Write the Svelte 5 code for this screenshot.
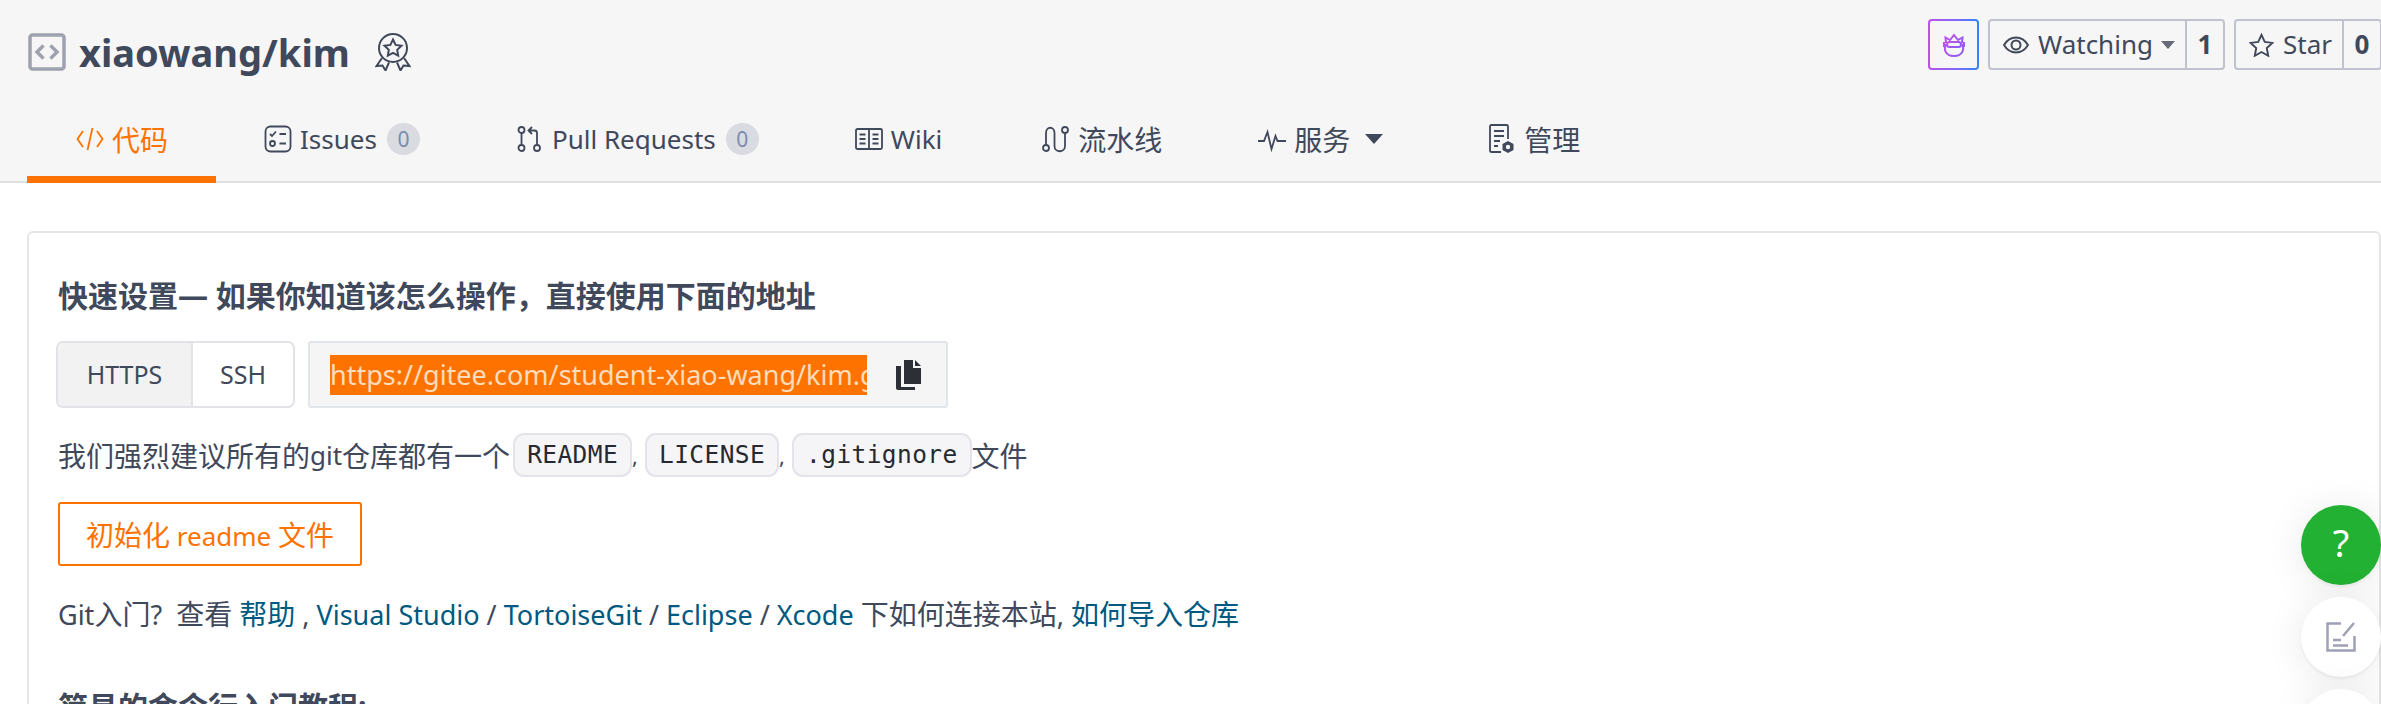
<script>
  const tabs = [
    { label: '代码', icon: 'code', active: true, cn: true },
    { label: 'Issues', icon: 'issues', count: 0 },
    { label: 'Pull Requests', icon: 'pr', count: 0 },
    { label: 'Wiki', icon: 'wiki' },
    { label: '流水线', icon: 'pipe', cn: true },
    { label: '服务', icon: 'pulse', caret: true, cn: true },
    { label: '管理', icon: 'manage', cn: true }
  ];
  const files = ['README', 'LICENSE', '.gitignore'];
</script>

<div class="page">
  <header class="head">
    <div class="top">
      <div class="title">
        <svg class="repo-icon" viewBox="0 0 38 38" width="38" height="38" fill="none" stroke="#9ea1ae">
          <rect x="2" y="2" width="34" height="34" rx="2.5" stroke-width="3.5" />
          <path d="M15.5 12.5 9 19l6.500 6.500M22.500 12.500 29 19l-6.500 6.500" stroke-width="3.500" />
        </svg>
        <h1>xiaowang/kim</h1>
        <svg class="medal" viewBox="0 0 36 38" width="36" height="38" fill="none" stroke="#40485b" stroke-width="2">
          <circle cx="18" cy="15" r="14" />
          <path d="M18 6.500l2.600 5.400 5.900.8-4.300 4.100 1 5.900-5.200-2.800-5.200 2.800 1-5.900-4.300-4.100 5.900-.8z" />
          <path d="M7 25 1.500 33l6-.5 3 5 3.500-8M29 25l5.500 8-6-.5-3 5-3.500-8" />
        </svg>
      </div>
      <div class="actions">
        <span class="gvp">
          <svg viewBox="0 0 26 26" width="26" height="26" fill="none" stroke="url(#gv)" stroke-width="2">
            <defs>
              <linearGradient id="gv" x1="0" y1="0" x2="1" y2="1">
                <stop offset="0" stop-color="#c04fe8" />
                <stop offset="1" stop-color="#8a5cf6" />
              </linearGradient>
            </defs>
            <path d="M5 11 4.500 5.500 9 8l4-5 4 5 4.500-2.500L21 11" />
            <rect x="6" y="10" width="14" height="5" rx="2.500" />
            <path d="M5 12c-2.500 5-1 12 8 12s10.500-7 8-12M3 10v5M23 10v5" />
          </svg>
        </span>
        <div class="btn-group watch">
          <span class="btn-main">
            <svg viewBox="0 0 26 18" width="26" height="18" fill="none" stroke="#40485b" stroke-width="2">
              <path d="M1 9c3-5 7.500-7.500 12-7.500S22 4 25 9c-3 5-7.500 7.500-12 7.500S4 14 1 9z" />
              <circle cx="13" cy="9" r="4.500" />
            </svg>
            Watching
            <i class="mini-caret"></i>
          </span>
          <b>1</b>
        </div>
        <div class="btn-group star">
          <span class="btn-main">
            <svg viewBox="0 0 26 25" width="25" height="24" fill="none" stroke="#40485b" stroke-width="2">
              <path d="M13 2l3.400 7.300 7.900 1-5.800 5.500 1.500 7.900L13 19.800l-7 3.900 1.500-7.900L1.700 10.300l7.900-1z" />
            </svg>
            Star
          </span>
          <b>0</b>
        </div>
      </div>
    </div>
    <nav class="tabs">
      {#each tabs as tab}
        <a class="tab" class:active={tab.active} class:has-caret={tab.caret} href="#top">
          <svg class="tab-icon" viewBox="0 0 28 30" width="28" height="30" fill="none" stroke="currentColor" stroke-width="1.800">
            {#if tab.icon === 'code'}
              <path d="M7 7 1.500 15 7 23M21 7l5.500 8L21 23M16.500 4l-5 22" />
            {:else if tab.icon === 'issues'}
              <rect x="1.500" y="2.500" width="25" height="25" rx="5" />
              <path d="M6 10l2 2 4-4.500M15.500 10H22M15.500 19.500H22" />
              <circle cx="8.500" cy="19.500" r="2.500" />
            {:else if tab.icon === 'pr'}
              <circle cx="5.500" cy="6" r="3" />
              <circle cx="5.500" cy="24" r="3" />
              <circle cx="21" cy="24" r="3" />
              <path d="M5.500 9v12M21 21V9c0-1.500-1-2.500-2.500-2.500H13M16 3l-3.500 3.500L16 10" />
            {:else if tab.icon === 'wiki'}
              <rect x="1" y="5" width="26" height="20" rx="1.500" />
              <path d="M14 5v20M4.500 10.500h6M4.500 15h6M4.500 19.500h6M17.500 10.500h6M17.500 15h6M17.500 19.500h6" />
            {:else if tab.icon === 'pipe'}
              <circle cx="4" cy="24" r="3" />
              <circle cx="23" cy="6" r="3" />
              <path d="M4 21V9c0-7 8.500-7 8.500 0v13c0 7 10.500 7 10.500 0V9" />
            {:else if tab.icon === 'pulse'}
              <path d="M0 17h6l3.500-9 4 17 4-13 2 5h8.500" />
            {:else if tab.icon === 'manage'}
              <path d="M13 28H3.500C2.500 28 2 27.500 2 26.500V2.500C2 1.500 2.500 1 3.500 1h15c1 0 1.500.5 1.500 1.500V15M6 7h10M6 12h10M6 17h6M6 22h4" />
              <path d="M20 17l5.500 3v6L20 29l-5.500-3v-6z" fill="currentColor" stroke="none" />
              <circle cx="20" cy="23" r="2.200" fill="#f6f6f6" stroke="none" />
            {/if}
          </svg>
          <span class:cn={tab.cn}>{tab.label}</span>
          {#if tab.count !== undefined}
            <span class="badge">{tab.count}</span>
          {/if}
          {#if tab.caret}
            <i class="caret"></i>
          {/if}
        </a>
      {/each}
    </nav>
  </header>

  <main class="card">
    <h3>快速设置— 如果你知道该怎么操作，直接使用下面的地址</h3>
    <div class="clone">
      <div class="proto">
        <span class="proto-on">HTTPS</span>
        <span>SSH</span>
      </div>
      <div class="url">
        <span class="selected">https://gitee.com/student-xiao-wang/kim.git</span>
        <svg viewBox="0 0 27 30" width="27" height="30" fill="#2d2f36">
          <path d="M9 0h9v8h8v16H9z" />
          <path d="M20 0l6 6h-6z" />
          <path d="M6 6v21h14v3H3a2 2 0 0 1-2-2V6z" />
        </svg>
      </div>
    </div>
    <p class="advice">
      <span class="cn">我们强烈建议所有的</span>git<span class="cn">仓库都有一个</span>{#each files as file, i}<code>{file}</code>{#if i < files.length - 1}<span class="comma">,</span>{/if}{/each}<span class="cn">文件</span>
    </p>
    <button class="init"><span class="cn">初始化</span> readme <span class="cn">文件</span></button>
    <p class="help">
      Git<span class="cn">入门</span>?&nbsp; <span class="cn">查看</span> <a href="#top" class="cn">帮助</a> , <a href="#top">Visual Studio</a> / <a href="#top">TortoiseGit</a> / <a href="#top">Eclipse</a> / <a href="#top">Xcode</a> <span class="cn">下如何连接本站</span>, <a href="#top" class="cn">如何导入仓库</a>
    </p>
    <h3 class="second">简易的命令行入门教程:</h3>
  </main>

  <div class="floats">
    <span class="fab green">?</span>
    <span class="fab">
      <svg viewBox="0 0 30 30" width="30" height="30" fill="none" stroke="#9ea1b5" stroke-width="2.500">
        <path d="M15 1.500H1.500v27h27V14M7 18h8M7 23.500h15M17 14 28 1" />
      </svg>
    </span>
    <span class="fab"></span>
  </div>
</div>

<style>
  :global(body) {
    margin: 0;
    background: #fff;
  }
  .page {
    position: relative;
    height: 704px;
    overflow: hidden;
    color: #40485b;
    font-family: "Noto Sans", "Noto Sans CJK SC", sans-serif;
    font-size: 26px;
  }
  .cn {
    font-size: 28px;
  }
  .head {
    height: 181px;
    background: #f6f6f6;
    border-bottom: 2px solid #e0e0e0;
  }
  .top {
    display: flex;
    justify-content: space-between;
    height: 104px;
    padding: 19px 0 0 28px;
    box-sizing: border-box;
  }
  .title {
    display: flex;
    align-items: center;
    height: 66px;
  }
  h1 {
    margin: 0 25px 0 13px;
    font-size: 38px;
    font-weight: 700;
    line-height: 44px;
  }
  .actions {
    display: flex;
    gap: 9px;
    height: 51px;
  }
  .gvp {
    display: flex;
    align-items: center;
    justify-content: center;
    width: 51px;
    box-sizing: border-box;
    border: 2px solid transparent;
    border-radius: 4px;
    background: linear-gradient(#f6f6f6, #f6f6f6) padding-box, linear-gradient(90deg, #c04fe8, #7a6cf8 60%, #2f86ff) border-box;
  }
  .btn-group {
    display: flex;
    align-items: stretch;
    box-sizing: border-box;
    border: 2px solid #c0c3ce;
    border-radius: 4px;
    line-height: 47px;
  }
  .watch {
    width: 237px;
  }
  .star {
    width: 148px;
    margin-right: -1px;
  }
  .btn-main {
    display: flex;
    align-items: center;
    flex: 1;
    gap: 9px;
    padding-left: 13px;
    border-right: 2px solid #c0c3ce;
  }
  .btn-group b {
    width: 36px;
    text-align: center;
  }
  .mini-caret {
    width: 0;
    height: 0;
    border: 7px solid transparent;
    border-top: 8px solid #666a76;
    border-bottom: 0;
    margin-left: -1px;
  }
  .tabs {
    display: flex;
    height: 77px;
    padding-left: 27px;
  }
  .tab {
    display: flex;
    align-items: center;
    box-sizing: border-box;
    height: 79px;
    padding: 0 48px 9px;
    color: #40485b;
    text-decoration: none;
  }
  .tab:first-child {
    padding-left: 49px;
  }
  .tab:nth-child(4) {
    padding-right: 52px;
  }
  .tab.active {
    color: #fe7300;
    border-bottom: 7px solid #fe7300;
    padding-bottom: 2px;
  }
  .tab.has-caret {
    padding-right: 57px;
  }
  .tab-icon {
    margin-right: 8px;
  }
  .badge {
    display: flex;
    align-items: center;
    justify-content: center;
    width: 33px;
    height: 32px;
    margin-left: 10px;
    border-radius: 16px;
    background: #d9dbe1;
    color: #7a8bb0;
    font-size: 21px;
  }
  .caret {
    width: 0;
    height: 0;
    margin-left: 15px;
    border: 9px solid transparent;
    border-top: 10px solid #40485b;
    border-bottom: 0;
  }
  .card {
    height: 600px;
    margin: 48px 0 0 27px;
    padding: 45px 0 0 29px;
    box-sizing: border-box;
    border: 2px solid #e5e5e5;
    border-radius: 6px;
  }
  h3 {
    margin: 0;
    font-size: 30px;
    font-weight: 700;
    line-height: 36px;
  }
  .clone {
    display: flex;
    gap: 13px;
    height: 67px;
    margin: 27px 0 0 -2px;
  }
  .proto {
    display: flex;
    width: 239px;
    box-sizing: border-box;
    border: 2px solid #e2e3e6;
    border-radius: 7px;
    overflow: hidden;
    font-size: 25px;
    line-height: 63px;
  }
  .proto span {
    flex: 1;
    text-align: center;
  }
  .proto .proto-on {
    flex: none;
    width: 133px;
    background: #f2f2f2;
    border-right: 2px solid #e2e3e6;
  }
  .url {
    display: flex;
    align-items: center;
    width: 640px;
    box-sizing: border-box;
    padding-left: 20px;
    background: #f5f5f6;
    border: 2px solid #e2e5ea;
    border-radius: 3px;
  }
  .selected {
    width: 537px;
    height: 40px;
    margin-right: 28px;
    overflow: hidden;
    white-space: nowrap;
    background: #fe7300;
    color: #ffdcbc;
    font-size: 27px;
    line-height: 40px;
  }
  .advice {
    display: flex;
    align-items: center;
    height: 44px;
    margin: 25px 0 0;
    white-space: nowrap;
  }
  code {
    height: 44px;
    margin-left: 3px;
    padding: 0 12px;
    box-sizing: border-box;
    background: #f5f5f8;
    border: 2px solid #e3e3e9;
    border-radius: 11px;
    color: #26292f;
    font-family: "DejaVu Sans Mono", monospace;
    font-size: 24.500px;
    letter-spacing: 0.4px;
    line-height: 40px;
  }
  .comma {
    width: 10px;
    color: #40485b;
    font-size: 22px;
  }
  .init {
    display: block;
    width: 304px;
    height: 64px;
    margin-top: 25px;
    padding: 0;
    background: #fff;
    border: 2px solid #fe7300;
    border-radius: 3px;
    color: #fe7300;
    font: inherit;
  }
  .help {
    margin: 29px 0 0;
    font-size: 27px;
    line-height: 38px;
    white-space: nowrap;
  }
  .help a {
    color: #005980;
    text-decoration: none;
  }
  .second {
    margin-top: 55px;
  }
  .floats {
    position: absolute;
    top: 505px;
    right: 0;
    display: flex;
    flex-direction: column;
    gap: 12px;
  }
  .fab {
    display: flex;
    align-items: center;
    justify-content: center;
    width: 80px;
    height: 80px;
    border-radius: 50%;
    background: #fff;
    box-shadow: 0 3px 40px rgba(0, 0, 0, 0.09), 0 2px 3px rgba(0, 0, 0, 0.05);
  }
  .green {
    box-sizing: border-box;
    padding-bottom: 6px;
    background: #22b133;
    color: #fff;
    font-size: 38px;
  }
</style>
